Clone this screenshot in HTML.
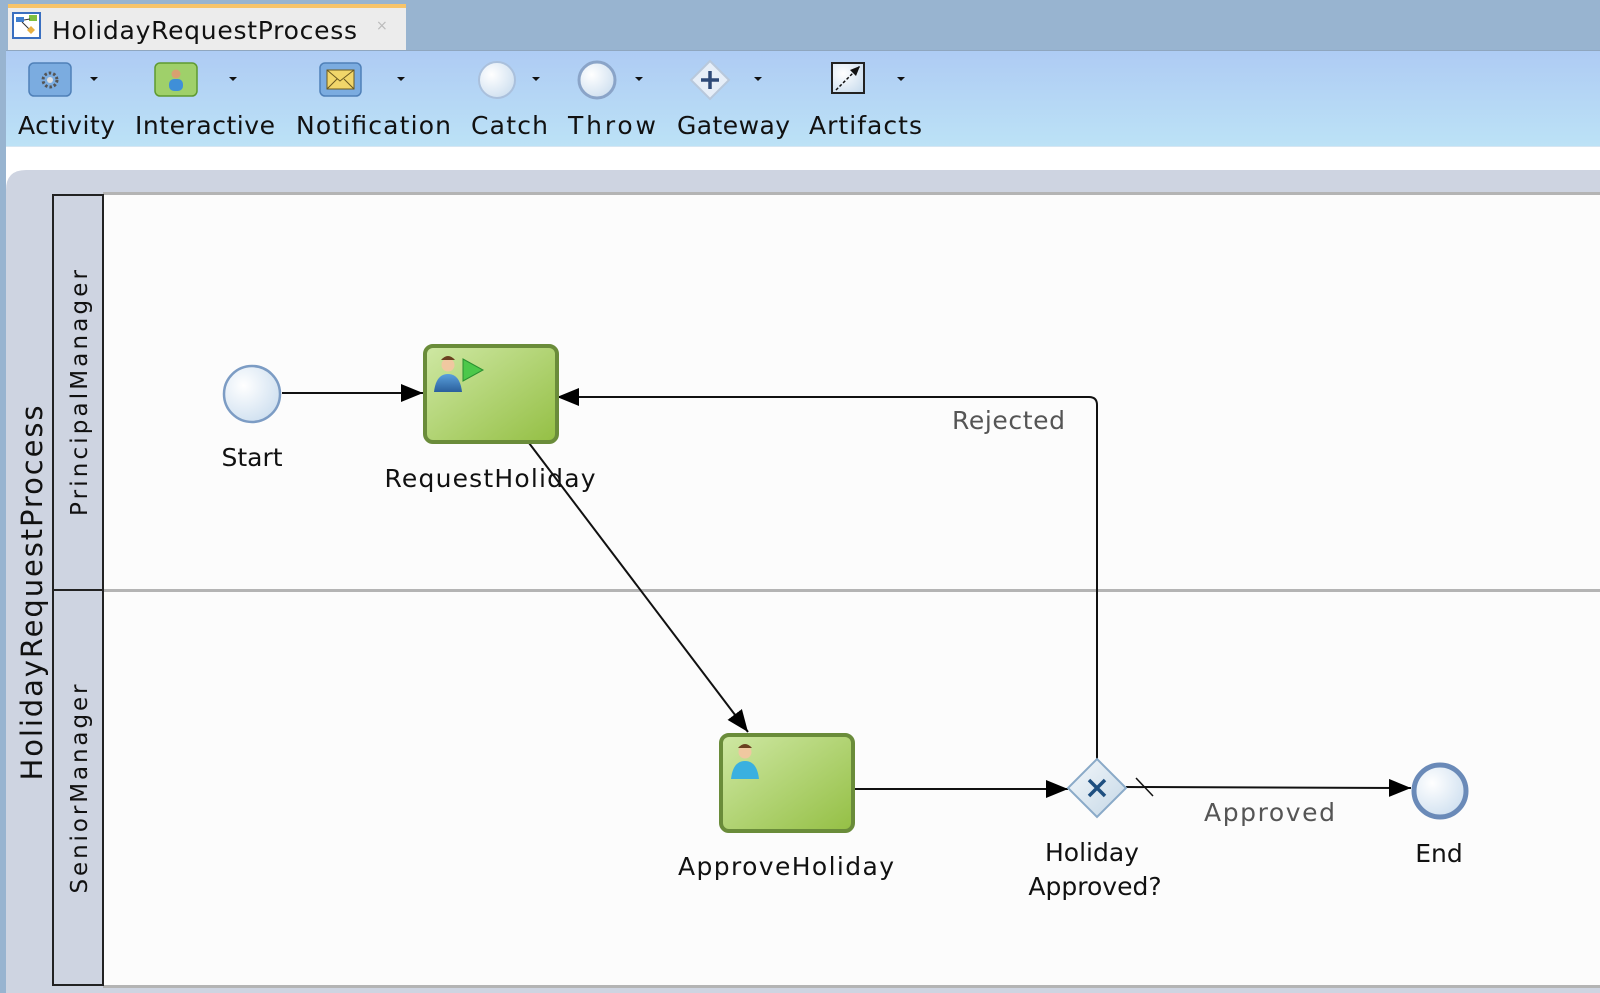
<!DOCTYPE html>
<html><head><meta charset="utf-8"><style>
html,body{margin:0;padding:0;width:1600px;height:993px;overflow:hidden;background:#fff}
text{font-family:"DejaVu Sans","Liberation Sans",sans-serif}
</style></head><body>
<svg width="1600" height="993" viewBox="0 0 1600 993" xmlns="http://www.w3.org/2000/svg">
<defs>
<linearGradient id="tb" x1="0" y1="0" x2="0" y2="1"><stop offset="0" stop-color="#aecbf4"/><stop offset="1" stop-color="#bce2f6"/></linearGradient>
<linearGradient id="task" x1="0" y1="0" x2="1" y2="1"><stop offset="0" stop-color="#cfe8a4"/><stop offset="1" stop-color="#94bf44"/></linearGradient>
<radialGradient id="ev" cx="0.35" cy="0.35" r="0.8"><stop offset="0" stop-color="#ffffff"/><stop offset="1" stop-color="#c9dcee"/></radialGradient>
<linearGradient id="gw" x1="0" y1="0" x2="1" y2="1"><stop offset="0" stop-color="#f4f8fb"/><stop offset="1" stop-color="#c4d7e6"/></linearGradient>
<linearGradient id="person" x1="0" y1="0" x2="0" y2="1"><stop offset="0" stop-color="#5aa0dc"/><stop offset="1" stop-color="#2a5f9c"/></linearGradient>
<marker id="ar" markerWidth="12" markerHeight="12" refX="11" refY="6" orient="auto" markerUnits="userSpaceOnUse"><path d="M0,0 L12,6 L0,12 z" fill="#000"/></marker>
<marker id="ar2" markerWidth="22" markerHeight="18" refX="22" refY="9" orient="auto" markerUnits="userSpaceOnUse"><path d="M0,0 L22,9 L0,18 z" fill="#000"/></marker>
</defs>
<!-- top bar -->
<rect x="0" y="0" width="1600" height="50" fill="#98b4d0"/>
<rect x="0" y="0" width="6" height="993" fill="#98b4d0"/>
<rect x="8" y="4" width="398" height="46" fill="#ececec"/>
<rect x="8" y="4" width="398" height="4" fill="#f7c46a"/>
<rect x="13" y="13" width="27" height="25" fill="#fff" stroke="#3a6fc0" stroke-width="2"/>
<rect x="16" y="17" width="8" height="5" fill="#3f7fd0"/><rect x="29" y="15" width="8" height="6" fill="#7fc040"/>
<path d="M24 20 L30 19 M22 22 L31 31" stroke="#333" stroke-width="1"/><path d="M31 26 l4 4 -4 4 -4 -4z" fill="#e8b040"/>
<text x="52" y="39" font-size="25" fill="#111" textLength="305">HolidayRequestProcess</text>
<text x="376" y="30" font-size="14" fill="#bbb">×</text>
<!-- toolbar -->
<rect x="6" y="50" width="1594" height="96" fill="url(#tb)"/>
<rect x="6" y="50" width="1594" height="1" fill="#8fa6bf"/>
<!-- Activity icon -->
<rect x="29" y="63" width="42" height="33" rx="5" fill="#7bace0" stroke="#4f80b8" stroke-width="1.5"/>
<circle cx="50" cy="80" r="7" fill="none" stroke="#555" stroke-width="3" stroke-dasharray="2.5 2"/><circle cx="50" cy="80" r="3" fill="#ddd"/>
<!-- Interactive -->
<rect x="155" y="63" width="42" height="33" rx="5" fill="#9fd06a" stroke="#5f9a30" stroke-width="1.5"/>
<circle cx="176" cy="74" r="4.5" fill="#d9a070"/><rect x="169" y="79" width="14" height="12" rx="5" fill="#3f8fd8"/>
<!-- Notification -->
<rect x="320" y="63" width="41" height="33" rx="5" fill="#7bace0" stroke="#4f80b8" stroke-width="1.5"/>
<rect x="327" y="70" width="27" height="19" fill="#f1d66a" stroke="#6b5a20"/><path d="M327 70 L340 81 L354 70 M327 89 L337 79 M354 89 L344 79" stroke="#6b5a20" fill="none"/>
<!-- catch / throw -->
<circle cx="497" cy="80" r="18" fill="url(#ev)" stroke="#aac0dc" stroke-width="2"/>
<circle cx="597" cy="80" r="18" fill="url(#ev)" stroke="#8aa4c8" stroke-width="3"/>
<!-- gateway -->
<path d="M710 61 L729 80 L710 99 L691 80 z" fill="#e6eef8" stroke="#b8c8dc" stroke-width="2"/>
<path d="M710 71 V89 M701 80 H719" stroke="#2e4a78" stroke-width="3.5"/>
<!-- artifacts -->
<rect x="832" y="63" width="32" height="30" fill="url(#ev)" stroke="#222" stroke-width="2"/>
<path d="M836 90 L860 66" stroke="#111" stroke-width="1.5" stroke-dasharray="3 2"/><path d="M860 66 L850 70 L856 76z" fill="#111"/>
<!-- dropdown arrows -->
<g fill="#111">
<path d="M90 77 h8 l-4 4z"/><path d="M229 77 h8 l-4 4z"/><path d="M397 77 h8 l-4 4z"/><path d="M532 77 h8 l-4 4z"/><path d="M635 77 h8 l-4 4z"/><path d="M754 77 h8 l-4 4z"/><path d="M897 77 h8 l-4 4z"/>
</g>
<g font-size="25" fill="#111">
<text x="18" y="134" textLength="97">Activity</text>
<text x="135" y="134" textLength="140">Interactive</text>
<text x="296" y="134" textLength="155">Notification</text>
<text x="471" y="134" textLength="77">Catch</text>
<text x="568" y="134" textLength="88">Throw</text>
<text x="677" y="134" textLength="113">Gateway</text>
<text x="809" y="134" textLength="113">Artifacts</text>
</g>
<rect x="6" y="146" width="1594" height="1" fill="#d6e6f2"/>
<!-- pool -->
<path d="M6 190 Q6 170 26 170 H1600 V993 H6 z" fill="#ced4e1"/>
<rect x="103" y="193" width="1497" height="792" fill="#fcfcfc"/>
<rect x="103" y="192" width="1497" height="3" fill="#b4b4b4"/>
<rect x="103" y="589" width="1497" height="3" fill="#b4b4b4"/>
<rect x="103" y="985" width="1497" height="3" fill="#b4b4b4"/>
<rect x="53" y="195" width="50" height="790" fill="#ced4e1" stroke="#222" stroke-width="2"/>
<line x1="53" y1="590" x2="103" y2="590" stroke="#222" stroke-width="2"/>
<text transform="translate(42,593) rotate(-90)" text-anchor="middle" font-size="29" fill="#111" textLength="375">HolidayRequestProcess</text>
<text transform="translate(87,393) rotate(-90)" text-anchor="middle" font-size="23" fill="#111" textLength="246">PrincipalManager</text>
<text transform="translate(87,789) rotate(-90)" text-anchor="middle" font-size="23" fill="#111" textLength="209">SeniorManager</text>
<!-- flows -->
<g stroke="#111" stroke-width="2" fill="none">
<line x1="282" y1="393" x2="423" y2="393" marker-end="url(#ar2)"/>
<path d="M1097 760 V405 Q1097 397 1089 397 H557" marker-end="url(#ar2)"/>
<line x1="529" y1="443" x2="748" y2="732" marker-end="url(#ar2)"/>
<line x1="853" y1="789" x2="1068" y2="789" marker-end="url(#ar2)"/>
<line x1="1126" y1="787" x2="1411" y2="788" marker-end="url(#ar2)"/>
<line x1="1136" y1="778" x2="1153" y2="796" stroke-width="1.5"/>
</g>
<!-- start -->
<circle cx="252" cy="394" r="28" fill="url(#ev)" stroke="#7c9cc4" stroke-width="2.5"/>
<!-- tasks -->
<rect x="425" y="346" width="132" height="96" rx="8" fill="url(#task)" stroke="#6a8c3a" stroke-width="4"/>
<circle cx="448" cy="365" r="6.5" fill="#f0c8a0"/><path d="M441 360 q7 -8 14 0" fill="#6b4020"/>
<path d="M434 392 q2 -18 14 -18 q12 0 14 18 z" fill="url(#person)"/>
<path d="M463 359 L483 370 L463 381 z" fill="#4cc84a" stroke="#2a9030"/>
<rect x="721" y="735" width="132" height="96" rx="8" fill="url(#task)" stroke="#6a8c3a" stroke-width="4"/>
<circle cx="745" cy="752" r="6.5" fill="#f0c8a0"/><path d="M738 748 q7 -8 14 0" fill="#6b4020"/>
<path d="M731 779 q2 -18 14 -18 q12 0 14 18 z" fill="#3ab0e0"/>
<!-- gateway -->
<path d="M1097 759 L1126 788 L1097 817 L1068 788 z" fill="url(#gw)" stroke="#8aaac8" stroke-width="2"/>
<path d="M1089 780 L1105 796 M1105 780 L1089 796" stroke="#1e4f80" stroke-width="3.5"/>
<!-- end -->
<circle cx="1440" cy="791" r="26" fill="url(#ev)" stroke="#6a8ab8" stroke-width="5"/>
<!-- labels -->
<g font-size="25" fill="#111" text-anchor="middle">
<text x="252" y="466">Start</text>
<text x="490" y="487" textLength="211">RequestHoliday</text>
<text x="786" y="875" textLength="216">ApproveHoliday</text>
<text x="1092" y="861">Holiday</text>
<text x="1095" y="895">Approved?</text>
<text x="1439" y="862">End</text>
</g>
<g font-size="25" fill="#555">
<text x="952" y="429" textLength="113">Rejected</text>
<text x="1204" y="821" textLength="131">Approved</text>
</g>
</svg>
</body></html>
